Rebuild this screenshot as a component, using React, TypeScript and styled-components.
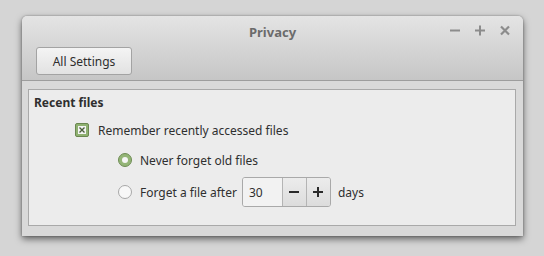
import styled, { createGlobalStyle } from "styled-components";

const GlobalStyle = createGlobalStyle`
  body {
    margin: 0;
    background: #d5d5d5;
    font-family: "Noto Sans", "DejaVu Sans", sans-serif;
  }
`;

const Page = styled.div`
  width: 544px;
  height: 256px;
  padding: 16px 0 0 22px;
  box-sizing: border-box;
`;

const Window = styled.div`
  width: 501px;
  height: 220px;
  display: flex;
  flex-direction: column;
  border-radius: 5px 5px 0 0;
  box-shadow: 0 3px 7px rgba(0, 0, 0, 0.55), 0 0 2px rgba(0, 0, 0, 0.35);
  overflow: hidden;
`;

const Header = styled.div`
  height: 65px;
  box-sizing: border-box;
  background: linear-gradient(#e4e4e4, #c6c6c6);
  border-bottom: 1px solid #9d9d9d;
  display: flex;
  flex-direction: column;
`;

const TitleRow = styled.div`
  height: 29px;
  position: relative;
  display: flex;
  align-items: center;
  justify-content: center;
  font-weight: bold;
  font-size: 13px;
  color: #6b6b6b;
  padding-top: 1px;
`;

const Controls = styled.div`
  position: absolute;
  right: 10px;
  top: 6px;
  display: flex;
  gap: 9px;
`;

const Ctrl = styled.svg`
  width: 16px;
  height: 16px;
`;

const Toolbar = styled.div`
  display: flex;
  padding: 1px 14px 0;
`;

const Button = styled.button`
  width: 96px;
  height: 28px;
  border: 1px solid #a3a3a3;
  border-radius: 3px;
  background: linear-gradient(#f4f4f4, #e2e2e2);
  font-family: inherit;
  font-size: 12px;
  color: #2e2e2e;
  padding: 0;
`;

const Content = styled.div`
  flex: 1;
  background: #d9d9d9;
  padding: 8px 7px 10px 6px;
  display: flex;
`;

const Frame = styled.div`
  flex: 1;
  border: 1px solid #a9a9a9;
  background: #ececec;
  padding: 3px 5px;
  font-size: 12px;
  color: #2f2f2f;
`;

const Heading = styled.div`
  font-weight: bold;
  height: 20px;
  line-height: 20px;
`;

const Row = styled.div<{ $indent: number; $h: number }>`
  display: flex;
  align-items: center;
  height: ${(p) => p.$h}px;
  padding-left: ${(p) => p.$indent}px;
  gap: 8px;
`;

const Check = styled.div`
  width: 12px;
  height: 12px;
  border: 1px solid #6a8750;
  border-radius: 2px;
  background: #8fb171;
  display: flex;
  align-items: center;
  justify-content: center;
  margin-right: 1px;
`;

const CheckInner = styled.div`
  width: 8px;
  height: 8px;
  background: #f4f4f4;
  display: flex;
  align-items: center;
  justify-content: center;
`;

const Radio = styled.div<{ $on: boolean }>`
  width: 12px;
  height: 12px;
  border-radius: 50%;
  border: 1px solid ${(p) => (p.$on ? "#6f8d55" : "#a8a8a8")};
  background: ${(p) => (p.$on ? "#94b577" : "#f8f8f8")};
  display: flex;
  align-items: center;
  justify-content: center;
`;

const Dot = styled.div`
  width: 6px;
  height: 6px;
  border-radius: 50%;
  background: #f6f6f6;
`;

const Spin = styled.div`
  display: flex;
  height: 28px;
  border: 1px solid #a9a9a9;
  border-radius: 3px;
  overflow: hidden;
  margin: 0 -1px 0 -3px;
`;

const SpinEntry = styled.div`
  width: 33px;
  padding-left: 6px;
  background: #f2f2f2;
  display: flex;
  align-items: center;
  color: #2f2f2f;
`;

const SpinButton = styled.div`
  width: 23px;
  border-left: 1px solid #b4b4b4;
  background: linear-gradient(#ececec, #dcdcdc);
  display: flex;
  align-items: center;
  justify-content: center;
`;

export default function App() {
  return (
    <>
      <GlobalStyle />
      <Page>
        <Window>
          <Header>
            <TitleRow>
              Privacy
              <Controls>
                <Ctrl viewBox="0 0 16 16">
                  <path d="M3 8.5h10" stroke="#8c8c8c" strokeWidth="2" />
                </Ctrl>
                <Ctrl viewBox="0 0 16 16">
                  <path d="M3 8.5h10M8 3.5v10" stroke="#8c8c8c" strokeWidth="2" />
                </Ctrl>
                <Ctrl viewBox="0 0 16 16">
                  <path d="M4 4.5l8 8M12 4.5l-8 8" stroke="#8c8c8c" strokeWidth="2.2" />
                </Ctrl>
              </Controls>
            </TitleRow>
            <Toolbar>
              <Button>All Settings</Button>
            </Toolbar>
          </Header>
          <Content>
            <Frame>
              <Heading>Recent files</Heading>
              <Row $indent={41} $h={34}>
                <Check>
                  <CheckInner>
                    <svg width="6" height="6" viewBox="0 0 6 6">
                      <path d="M0.5 0.5l5 5M5.5 0.5l-5 5" stroke="#4a5e3a" strokeWidth="1.4" />
                    </svg>
                  </CheckInner>
                </Check>
                Remember recently accessed files
              </Row>
              <Row $indent={84} $h={26}>
                <Radio $on>
                  <Dot />
                </Radio>
                Never forget old files
              </Row>
              <Row $indent={84} $h={38}>
                <Radio $on={false} />
                Forget a file after
                <Spin>
                  <SpinEntry>30</SpinEntry>
                  <SpinButton>
                    <svg width="12" height="12" viewBox="0 0 12 12">
                      <path d="M1 6h10" stroke="#2a2a2a" strokeWidth="2" />
                    </svg>
                  </SpinButton>
                  <SpinButton>
                    <svg width="12" height="12" viewBox="0 0 12 12">
                      <path d="M1 6h10M6 1v10" stroke="#2a2a2a" strokeWidth="2" />
                    </svg>
                  </SpinButton>
                </Spin>
                days
              </Row>
            </Frame>
          </Content>
        </Window>
      </Page>
    </>
  );
}
